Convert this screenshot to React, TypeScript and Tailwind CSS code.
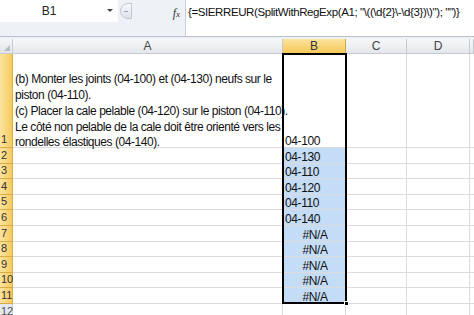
const font = "font-['Liberation_Sans',Arial,sans-serif]"

const rowH = ['h-[94px]', 'h-[15.6px]', 'h-[15.6px]', 'h-[15.6px]', 'h-[15.6px]', 'h-[15.6px]', 'h-[15.6px]', 'h-[15.6px]', 'h-[15.6px]', 'h-[15.6px]', 'h-[15.6px]', 'h-[15.6px]']

const bValues = ['04-100', '04-130', '04-110', '04-120', '04-110', '04-140', '#N/A', '#N/A', '#N/A', '#N/A', '#N/A', '']

const aText = [
  '(b) Monter les joints (04-100) et (04-130) neufs sur le',
  'piston (04-110).',
  '(c) Placer la cale pelable (04-120) sur le piston (04-110).',
  'Le côté non pelable de la cale doit être orienté vers les',
  'rondelles élastiques (04-140).',
]

function FormulaBar() {
  return (
    <div className="h-[37px] flex bg-[#eef1f5] border-b border-[#b8c0cc]">
      <div className="w-[118px] flex flex-col">
        <div className="h-[22px] bg-white flex items-center relative">
          <span className="w-full text-center text-[12px] text-[#222] pr-[20px]">B1</span>
          <span className="absolute right-[5px] top-[9px] w-0 h-0 border-l-[3px] border-r-[3px] border-t-[3px] border-l-transparent border-r-transparent border-t-[#444]" />
        </div>
      </div>
      <div className="w-[67px] flex items-start pt-[3px]">
        <div className="w-[12px] h-[16px] ml-[2px] rounded-l-full border border-[#c4cad3] bg-gradient-to-b from-[#f7f8fa] to-[#dfe3e9] flex items-center justify-center">
          <span className="block w-[4px] h-[1px] bg-[#9aa2ad]" />
        </div>
        <span className="ml-auto mr-[5px] mt-[1px] italic text-[12px] font-['Liberation_Serif',serif] text-[#333]">
          f<span className="text-[9px]">x</span>
        </span>
      </div>
      <div className="flex-1 bg-white border-l border-[#c9cfd8] pl-[2px] pt-[4px] text-[11.5px] text-[#111] whitespace-nowrap overflow-hidden tracking-[-0.4px]">
        {'{=SIERREUR(SplitWithRegExp(A1; "\\((\\d{2}\\-\\d{3})\\)"); "")}'}
      </div>
    </div>
  )
}

function ColHeader({ label, w, sel }: { label: string; w: string; sel?: boolean }) {
  return (
    <div
      className={`${w} shrink-0 h-full flex items-center justify-center text-[12px] border-r border-b ${
        sel
          ? 'bg-gradient-to-b from-[#fbe29b] to-[#f5c956] border-[#d6a93c] text-[#333]'
          : 'bg-gradient-to-b from-[#f7f8f9] to-[#e4e7eb] border-[#c5cad1] text-[#444]'
      }`}
    >
      {label}
    </div>
  )
}

export default function App() {
  return (
    <div className={`w-[474px] h-[315px] overflow-hidden bg-white ${font}`}>
      <FormulaBar />
      <div className="h-[2px] bg-[#eef1f5]" />
      {/* column headers */}
      <div className="h-[15px] flex">
        <div className="w-[13px] shrink-0 h-full bg-gradient-to-b from-[#f4f5f7] to-[#e2e5e9] border-r border-b border-[#c5cad1] relative">
          <span className="absolute right-[2px] bottom-[2px] w-0 h-0 border-b-[6px] border-l-[6px] border-b-[#b6bcc4] border-l-transparent" />
        </div>
        <ColHeader label="A" w="w-[270px]" />
        <ColHeader label="B" w="w-[63px]" sel />
        <ColHeader label="C" w="w-[61px]" />
        <ColHeader label="D" w="w-[63px]" />
        <ColHeader label="" w="flex-1" />
      </div>

      {/* rows */}
      <div className="relative">
        {rowH.map((h, i) => {
          const sel = i < 11
          const b = bValues[i]
          const na = b === '#N/A'
          return (
            <div key={i} className={`${h} flex`}>
              <div
                className={`w-[13px] shrink-0 h-full flex items-end justify-start pl-[1px] text-[11px] leading-[15px] border-r border-b ${
                  sel
                    ? 'bg-gradient-to-r from-[#fbe39e] to-[#f6cb5c] border-[#d9ad45] text-[#333]'
                    : 'bg-[#e4e9f0] border-[#c5cad1] text-[#555]'
                }`}
              >
                {i + 1}
              </div>
              <div className="w-[270px] shrink-0 h-full border-r border-b border-[#dadcdd] text-[12px] leading-[15.75px] text-[#111] pl-[2px] flex flex-col justify-end whitespace-nowrap tracking-[-0.45px]">
                {i === 0 && (
                  <div className="translate-y-[4px]">
                    {aText.map((t) => (
                      <div key={t}>{t}</div>
                    ))}
                  </div>
                )}
              </div>
              <div
                className={`w-[63px] shrink-0 h-full border-r border-b border-[#dadcdd] text-[12px] leading-[15px] text-[#111] flex items-end pl-[2px] tracking-[-0.4px] ${
                  na ? 'justify-center' : ''
                } ${i >= 1 && i < 11 ? 'bg-[#c5dcf6]' : ''}`}
              >
                <span className="translate-y-[2px]">{b}</span>
              </div>
              <div className="w-[61px] shrink-0 h-full border-r border-b border-[#dadcdd]" />
              <div className="w-[63px] shrink-0 h-full border-r border-b border-[#dadcdd]" />
              <div className="flex-1 h-full border-b border-[#dadcdd]" />
            </div>
          )
        })}
        {/* selection border B1:B11 */}
        <div className="absolute left-[282px] top-[-1px] w-[65px] h-[251px] border-2 border-black pointer-events-none" />
        <div className="absolute left-[344px] top-[247px] w-[5px] h-[5px] bg-black border border-white pointer-events-none" />
      </div>
    </div>
  )
}
